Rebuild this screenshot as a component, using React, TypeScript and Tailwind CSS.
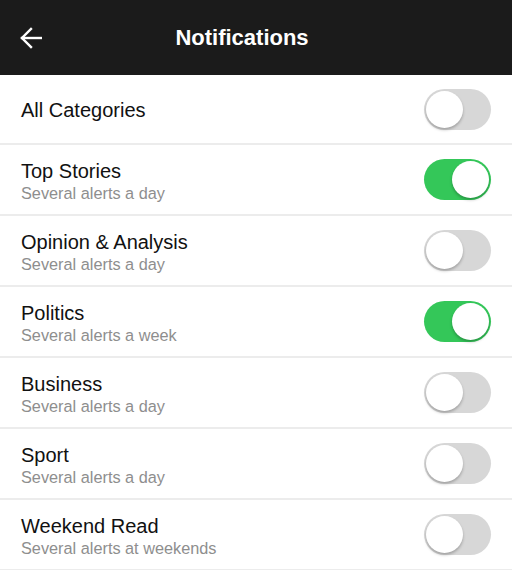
import { useState } from 'react';

type Category = {
  name: string;
  freq?: string;
  on: boolean;
};

const CATEGORIES: Category[] = [
  { name: 'All Categories', on: false },
  { name: 'Top Stories', freq: 'Several alerts a day', on: true },
  { name: 'Opinion & Analysis', freq: 'Several alerts a day', on: false },
  { name: 'Politics', freq: 'Several alerts a week', on: true },
  { name: 'Business', freq: 'Several alerts a day', on: false },
  { name: 'Sport', freq: 'Several alerts a day', on: false },
  { name: 'Weekend Read', freq: 'Several alerts at weekends', on: false },
];

function Toggle({ on, onClick }: { on: boolean; onClick: () => void }) {
  return (
    <button
      onClick={onClick}
      className={`relative w-[67px] h-[41px] rounded-full flex-shrink-0 transition-colors ${
        on ? 'bg-[#34c759]' : 'bg-[#d7d7d7]'
      }`}
    >
      <span
        className={`absolute top-[2px] w-[37px] h-[37px] rounded-full bg-white shadow-[0_2px_3px_rgba(0,0,0,0.25)] transition-all ${
          on ? 'left-[28px]' : 'left-[2px]'
        }`}
      />
    </button>
  );
}

export default function App() {
  const [items, setItems] = useState(CATEGORIES);

  const toggle = (i: number) =>
    setItems((prev) => prev.map((c, j) => (j === i ? { ...c, on: !c.on } : c)));

  return (
    <div className="w-[512px] h-[570px] overflow-hidden bg-white" style={{ fontFamily: '"Liberation Sans", Arial, sans-serif' }}>
      {/* Header */}
      <div className="h-[75px] bg-[#1b1b1b] flex items-center px-[20px]">
        <button className="w-[22px] h-[22px] text-white">
          <svg viewBox="0 0 22 22" className="w-[22px] h-[22px]" fill="none" stroke="currentColor" strokeWidth="2.4" strokeLinecap="square">
            <path d="M2 11 H21" />
            <path d="M11 2 L2 11 L11 20" />
          </svg>
        </button>
        <div className="flex-1 text-center pr-[50px] text-white text-[22px] font-semibold">Notifications</div>
      </div>

      {/* Rows */}
      {items.map((c, i) => (
        <div
          key={c.name}
          className={`flex items-center justify-between pl-[21px] pr-[21px] border-b-2 border-[#ececec] ${
            i === 0 ? 'h-[70px]' : 'h-[71px]'
          }`}
        >
          <div className={`flex flex-col ${c.freq ? 'mt-[3px]' : 'mt-[1px]'}`}>
            <span className="text-[20px] leading-[24px] text-[#111]">{c.name}</span>
            {c.freq && <span className="text-[16.3px] leading-[20px] text-[#8e8e8e]">{c.freq}</span>}
          </div>
          <Toggle on={c.on} onClick={() => toggle(i)} />
        </div>
      ))}
    </div>
  );
}
